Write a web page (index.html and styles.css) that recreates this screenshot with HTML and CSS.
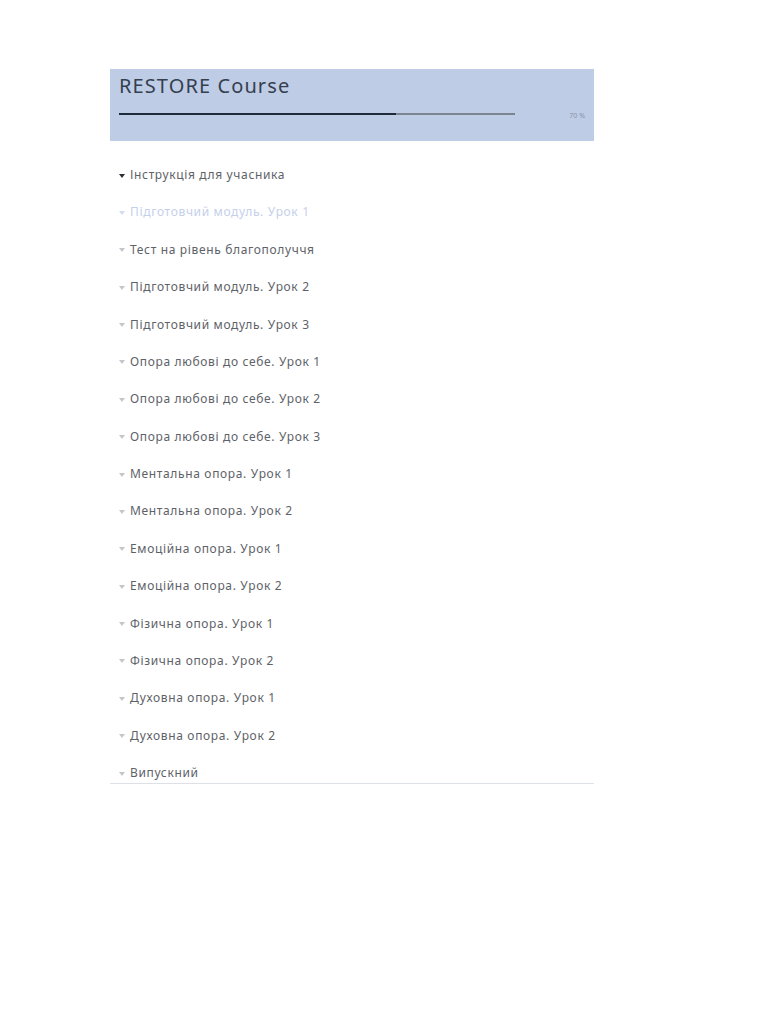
FILE: index.html
```html
<!DOCTYPE html>
<html lang="uk">
<head>
<meta charset="utf-8">
<title>RESTORE Course</title>
<link rel="stylesheet" href="styles.css">
</head>
<body>
<div class="course">
  <header class="course-head">
    <h1 class="course-title">RESTORE Course</h1>
    <div class="progress-row">
      <div class="progress-track"><div class="progress-fill" style="width:70%"></div></div>
      <span class="progress-label">70 %</span>
    </div>
  </header>
  <ul class="lessons">
    <li class="lesson open"><span class="caret"></span>Інструкція для учасника</li>
    <li class="lesson active"><span class="caret"></span>Підготовчий модуль. Урок 1</li>
    <li class="lesson"><span class="caret"></span>Тест на рівень благополуччя</li>
    <li class="lesson"><span class="caret"></span>Підготовчий модуль. Урок 2</li>
    <li class="lesson"><span class="caret"></span>Підготовчий модуль. Урок 3</li>
    <li class="lesson"><span class="caret"></span>Опора любові до себе. Урок 1</li>
    <li class="lesson"><span class="caret"></span>Опора любові до себе. Урок 2</li>
    <li class="lesson"><span class="caret"></span>Опора любові до себе. Урок 3</li>
    <li class="lesson"><span class="caret"></span>Ментальна опора. Урок 1</li>
    <li class="lesson"><span class="caret"></span>Ментальна опора. Урок 2</li>
    <li class="lesson"><span class="caret"></span>Емоційна опора. Урок 1</li>
    <li class="lesson"><span class="caret"></span>Емоційна опора. Урок 2</li>
    <li class="lesson"><span class="caret"></span>Фізична опора. Урок 1</li>
    <li class="lesson"><span class="caret"></span>Фізична опора. Урок 2</li>
    <li class="lesson"><span class="caret"></span>Духовна опора. Урок 1</li>
    <li class="lesson"><span class="caret"></span>Духовна опора. Урок 2</li>
    <li class="lesson"><span class="caret"></span>Випускний</li>
  </ul>
</div>
</body>
</html>
```
FILE: styles.css
```css
html, body {
  margin: 0;
  padding: 0;
  background: #ffffff;
}
body {
  font-family: "Noto Sans", "Open Sans", sans-serif;
}
.course {
  width: 484px;
  margin: 69px 0 0 110px;
}
.course-head {
  background: #bfcce6;
  height: 72px;
  box-sizing: border-box;
  padding: 5px 9px 0 9px;
}
.course-title {
  margin: 0;
  font-size: 20px;
  font-weight: 400;
  line-height: 24px;
  color: #34404e;
  letter-spacing: 1.1px;
}
.progress-row {
  display: flex;
  align-items: center;
  margin-top: 10px;
}
.progress-track {
  width: 396px;
  height: 2px;
  background: #7c8492;
}
.progress-fill {
  height: 2px;
  background: #1f2b3a;
}
.progress-label {
  margin-left: auto;
  font-size: 7px;
  color: #8a93a3;
  padding-top: 3px;
}
.lessons {
  list-style: none;
  margin: 0;
  padding: 14px 0 0 0;
  border-bottom: 1px solid #dde1e5;
}
.lesson {
  display: flex;
  align-items: center;
  height: 14px;
  line-height: 14px;
  padding: 13px 0 10.375px 9px;
  font-size: 12px;
  color: #5e6268;
  letter-spacing: 0.65px;
}
.lesson:last-child {
  padding-bottom: 3px;
}
.caret {
  width: 0;
  height: 0;
  border-left: 3px solid transparent;
  border-right: 3px solid transparent;
  border-top: 4px solid #c3c6cb;
  margin-right: 5px;
  margin-top: 1px;
}
.lesson.open .caret {
  border-top-color: #2b2f36;
}
.lesson.active {
  color: #c5d0ea;
}
.lesson.active .caret {
  border-top-color: #d3dbee;
}
```
